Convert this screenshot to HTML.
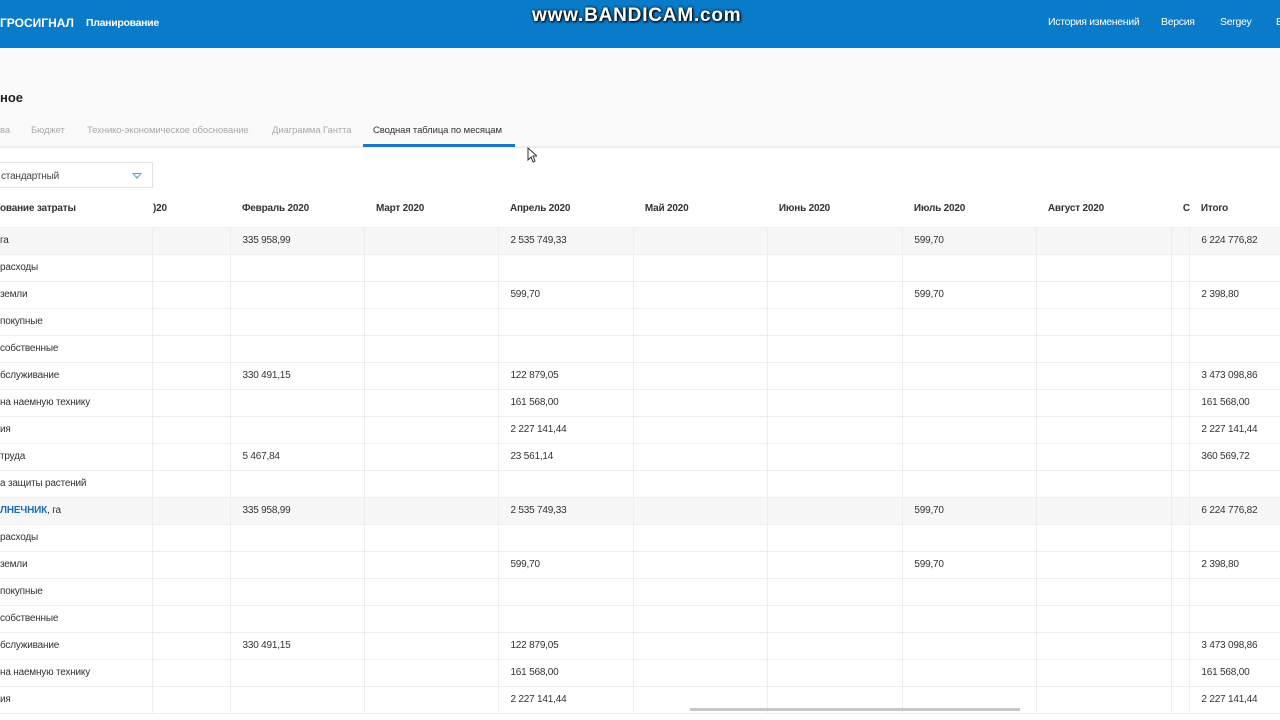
<!DOCTYPE html>
<html><head><meta charset="utf-8"><style>
*{margin:0;padding:0;box-sizing:border-box}
body{width:1280px;height:720px;overflow:hidden;background:#fafafa;font-family:"Liberation Sans",Arial,sans-serif;position:relative;color:#333}
.hdr{position:absolute;left:0;top:0;width:1280px;height:48px;background:#0a7bc9;color:#fff}
.hdr span{position:absolute;top:16px;font-size:10.5px;letter-spacing:-0.3px;white-space:nowrap}
.wm{position:absolute;left:532px;top:5px;font-size:19px;font-weight:bold;color:#fff;text-shadow:0 0 3px #000,1px 1px 2px #000;letter-spacing:0.8px}
.title{position:absolute;left:0;top:90px;font-size:13px;font-weight:bold;color:#222}
.tabs{position:absolute;left:0;top:125px;font-size:9.5px;color:#aaa;letter-spacing:-0.1px}
.tabs span{position:absolute;white-space:nowrap}
.tabline{position:absolute;left:0;top:146px;width:1280px;height:2px;background:#eee}
.tabact{position:absolute;left:363px;top:144px;width:152px;height:3px;background:#1a78c6}
.white{position:absolute;left:0;top:148px;width:1280px;height:572px;background:#fff}
.sel{position:absolute;left:-5px;top:162px;width:158px;height:26px;border:1px solid #e3e3e3;background:#fff;font-size:10px;color:#444;padding:8px 0 0 5px;letter-spacing:-0.2px}
.sel i{position:absolute;right:10px;top:10px;width:0;height:0;border-left:5px solid transparent;border-right:5px solid transparent;border-top:6px solid #5aa0d8}
.sel i:after{content:"";position:absolute;left:-3px;top:-5px;border-left:3px solid transparent;border-right:3px solid transparent;border-top:3.5px solid #fff}
table{position:absolute;left:0;top:188px;border-collapse:collapse;table-layout:fixed;font-size:10px;color:#333;letter-spacing:-0.2px}
th{height:39px;text-align:left;font-weight:bold;padding:3px 0 0 11px;white-space:nowrap;overflow:hidden;border-bottom:1px solid #eee}
td{height:27px;padding-left:11px;white-space:nowrap;overflow:hidden;border-bottom:1px solid #eee;border-left:1px solid #eee}
td:first-child{border-left:none;padding-left:0}
th:first-child{padding-left:0}
tr.g td{background:#f7f7f7}
.b{color:#1a6fb5;font-weight:bold}
.scroll{position:absolute;left:690px;top:708px;width:330px;height:3px;background:#c8c8c8}
</style></head><body>
<div class="hdr">
<span style="left:0;font-size:12px;font-weight:bold;top:16px;letter-spacing:0">ГРОСИГНАЛ</span>
<span style="left:86px;font-weight:bold;top:17px">Планирование</span>
<span style="left:1048px">История изменений</span>
<span style="left:1161px">Версия</span>
<span style="left:1220px">Sergey</span>
<span style="left:1276px">В</span>
</div>
<div class="wm">www.BANDICAM.com</div>
<div class="title">ное</div>
<div class="tabs">
<span style="left:0">ва</span>
<span style="left:31px">Бюджет</span>
<span style="left:87px">Технико-экономическое обоснование</span>
<span style="left:272px">Диаграмма Гантта</span>
<span style="left:373px;color:#333">Сводная таблица по месяцам</span>
</div>
<div class="tabline"></div>
<div class="white"></div>
<div class="tabact"></div>
<div class="sel">стандартный<i></i></div>
<table>
<colgroup><col style="width:153px"><col style="width:78px"><col style="width:134px"><col style="width:134px"><col style="width:135px"><col style="width:134px"><col style="width:135px"><col style="width:134px"><col style="width:135px"><col style="width:18px"><col style="width:90px"></colgroup>
<tr><th>ование затраты</th><th style="padding-left:0">)20</th><th>Февраль 2020</th><th>Март 2020</th><th>Апрель 2020</th><th>Май 2020</th><th>Июнь 2020</th><th>Июль 2020</th><th>Август 2020</th><th>С</th><th>Итого</th></tr>
<tr class="g"><td>га</td><td></td><td>335 958,99</td><td></td><td>2 535 749,33</td><td></td><td></td><td>599,70</td><td></td><td></td><td>6 224 776,82</td></tr>
<tr><td>расходы</td><td></td><td></td><td></td><td></td><td></td><td></td><td></td><td></td><td></td><td></td></tr>
<tr><td>земли</td><td></td><td></td><td></td><td>599,70</td><td></td><td></td><td>599,70</td><td></td><td></td><td>2 398,80</td></tr>
<tr><td>покупные</td><td></td><td></td><td></td><td></td><td></td><td></td><td></td><td></td><td></td><td></td></tr>
<tr><td>собственные</td><td></td><td></td><td></td><td></td><td></td><td></td><td></td><td></td><td></td><td></td></tr>
<tr><td>бслуживание</td><td></td><td>330 491,15</td><td></td><td>122 879,05</td><td></td><td></td><td></td><td></td><td></td><td>3 473 098,86</td></tr>
<tr><td>на наемную технику</td><td></td><td></td><td></td><td>161 568,00</td><td></td><td></td><td></td><td></td><td></td><td>161 568,00</td></tr>
<tr><td>ия</td><td></td><td></td><td></td><td>2 227 141,44</td><td></td><td></td><td></td><td></td><td></td><td>2 227 141,44</td></tr>
<tr><td>труда</td><td></td><td>5 467,84</td><td></td><td>23 561,14</td><td></td><td></td><td></td><td></td><td></td><td>360 569,72</td></tr>
<tr><td>а защиты растений</td><td></td><td></td><td></td><td></td><td></td><td></td><td></td><td></td><td></td><td></td></tr>
<tr class="g"><td><span class="b">ЛНЕЧНИК</span>, га</td><td></td><td>335 958,99</td><td></td><td>2 535 749,33</td><td></td><td></td><td>599,70</td><td></td><td></td><td>6 224 776,82</td></tr>
<tr><td>расходы</td><td></td><td></td><td></td><td></td><td></td><td></td><td></td><td></td><td></td><td></td></tr>
<tr><td>земли</td><td></td><td></td><td></td><td>599,70</td><td></td><td></td><td>599,70</td><td></td><td></td><td>2 398,80</td></tr>
<tr><td>покупные</td><td></td><td></td><td></td><td></td><td></td><td></td><td></td><td></td><td></td><td></td></tr>
<tr><td>собственные</td><td></td><td></td><td></td><td></td><td></td><td></td><td></td><td></td><td></td><td></td></tr>
<tr><td>бслуживание</td><td></td><td>330 491,15</td><td></td><td>122 879,05</td><td></td><td></td><td></td><td></td><td></td><td>3 473 098,86</td></tr>
<tr><td>на наемную технику</td><td></td><td></td><td></td><td>161 568,00</td><td></td><td></td><td></td><td></td><td></td><td>161 568,00</td></tr>
<tr><td>ия</td><td></td><td></td><td></td><td>2 227 141,44</td><td></td><td></td><td></td><td></td><td></td><td>2 227 141,44</td></tr>
</table>
<div class="scroll"></div>
<svg style="position:absolute;left:527px;top:147px" width="10" height="16" viewBox="0 0 10 16"><path d="M1 1 L1 13 L4 10 L6 15 L8 14 L6 9 L10 9 Z" fill="#fff" stroke="#333" stroke-width="1"/></svg>
</body></html>
